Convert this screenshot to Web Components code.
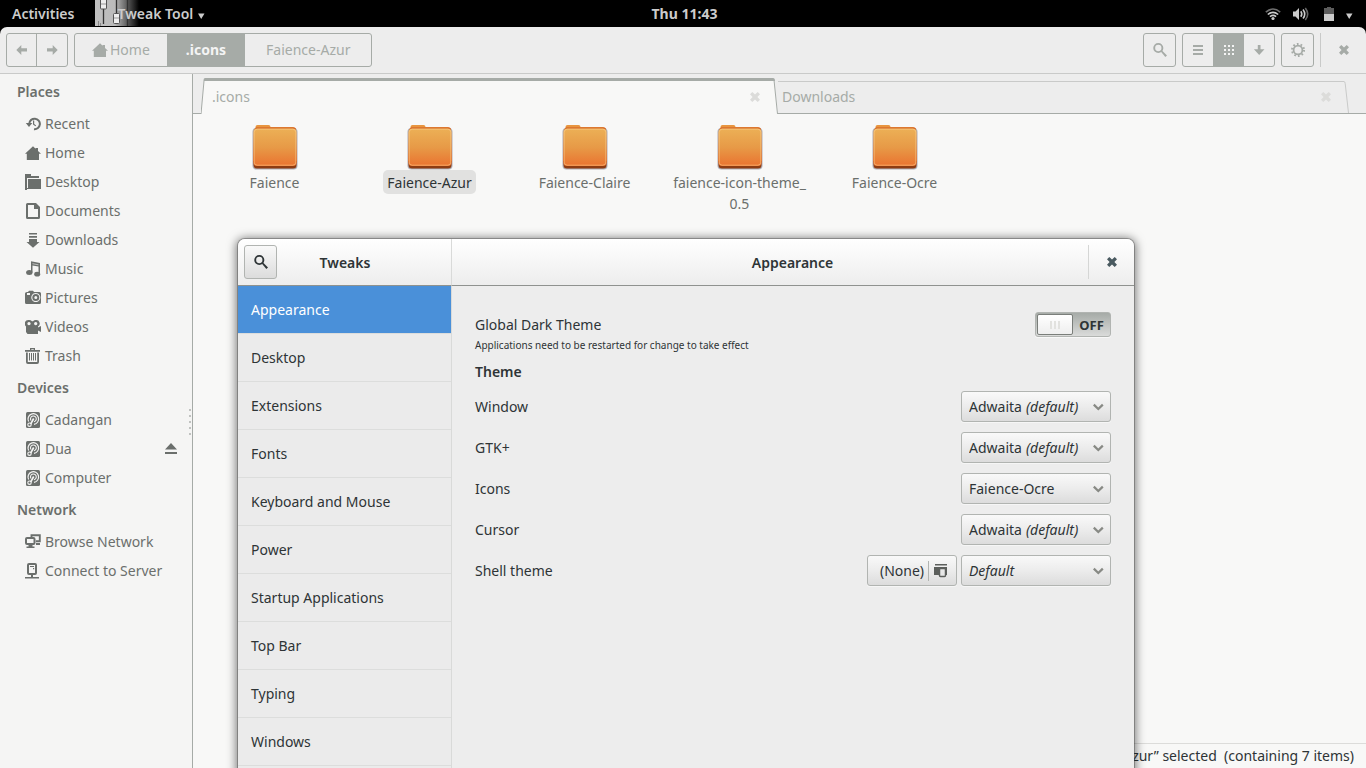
<!DOCTYPE html>
<html lang="en">
<head>
<meta charset="utf-8">
<meta name="viewport" content="width=device-width, initial-scale=1">
<title>Tweak Tool</title>
<style>
html, body { margin: 0; height: 100%; overflow: hidden; background: #000; }
body { font: 14px/20px "Noto Sans", "Open Sans", sans-serif; color: #2e3436; }
</style>
</head>
<body>
<desk-shell></desk-shell>
<script>
const ICONS = {
  back: '<path d="M7.300 3v3.300H13v3.200H7.300V13L2.300 8z"/>',
  forward: '<path d="M8.700 3v3.300H3v3.200h5.700V13l5-5z"/>',
  down: '<path d="M6.800 3h2.700v4.200H13.500L8.200 13 2.900 7.200h3.900z"/>',
  home: '<path d="M0 8.800 8 1.300l2.600 2.400V3H13v2.900l3 2.900h-2V15H1.800V8.800z"/>',
  search: '<circle cx="6.300" cy="6" r="4.100" fill="none" stroke="currentColor" stroke-width="1.900"/><path d="M8.800 9.600 10 8.500l5 4.900-1.700 1.700z"/>',
  list: '<path d="M3 3h10v2H3zM3 7h10v2H3zM3 11h10v2H3z"/>',
  grid: '<path d="M3 3h2v2H3zM7 3h2v2H7zM11 3h2v2h-2zM3 7h2v2H3zM7 7h2v2H7zM11 7h2v2h-2zM3 11h2v2H3zM7 11h2v2H7zM11 11h2v2h-2z"/>',
  gear: '<circle cx="8" cy="8" r="4.400" fill="none" stroke="currentColor" stroke-width="1.800"/><circle cx="8" cy="8" r="6" fill="none" stroke="currentColor" stroke-width="2" stroke-dasharray="1.700 2.070"/>',
  close: '<path d="M5.300 3 8 5.600 10.700 3 13 5.300 10.400 8l2.600 2.700L10.700 13 8 10.400 5.300 13 3 10.700 5.600 8 3 5.300z"/>',
  recent: '<path d="M4.300 7.500a5.300 5.300 0 1 1 4.700 5.700" fill="none" stroke="currentColor" stroke-width="2"/><path d="M.8 7h6.500L4 11z"/><path d="M8.600 4.500v3.700l2.200 1.700" fill="none" stroke="currentColor" stroke-width="1.200"/>',
  desktop: '<path d="M0 0h6v2h8v2H2v12H0z"/><path d="M3 5h13v10H3z"/><path d="M0 14h4v1H0z"/>',
  document: '<path fill-rule="evenodd" d="M2.500 0H11l4 4v10.500q0 1.500-1.500 1.500h-11Q1 16 1 14.500v-13Q1 0 2.500 0zM3 2v12h10V6H9V2z"/>',
  downloads: '<path d="M4 1h8v1.500H4zM4 4h8v1.700H4zM4 7h8v3h2.500L8 15.800 1.500 10H4z"/>',
  music: '<path d="M6 .3 15 2v11h-1.500V5.500L7.500 4.400v7H6z"/><ellipse cx="4.300" cy="11.500" rx="3.200" ry="2.500"/><ellipse cx="12.200" cy="13.200" rx="3" ry="2.400"/><path d="m7.500 2.700 6 1.100" stroke="#f5f5f4" stroke-width=".6"/>',
  pictures: '<path fill-rule="evenodd" d="M2 2h1L4 .8h4L9 2h5.500q1.500 0 1.500 1.500v9q0 1.500-1.500 1.500h-13Q0 14 0 12.500v-9Q0 2 2 2zM2 3v2h3V3zM10.800 3a4.500 4.500 0 1 0 .01 0z"/><circle cx="10.800" cy="7.500" r="2.500" fill="none" stroke="currentColor" stroke-width="2"/>',
  videos: '<path fill-rule="evenodd" d="M4 1a4 4 0 0 1 3 1.300h1A3.800 3.800 0 0 1 11 1a3.500 3.500 0 0 1 2 6.500v1L16 7v6l-3-1.500V15H2.500L1 13V7.500A3.700 3.700 0 0 1 4 1zM4 3a1.600 1.600 0 1 0 .01 0zM10.700 3a1.600 1.600 0 1 0 .01 0z"/>',
  trash: '<path d="M0 2h5V0h5v2h5v1.800H0zM6.300 1.200V2h2.400v-.8z" fill-rule="evenodd"/><path d="M1.900 4.500V14q0 1 1 1h9.200q1 0 1-1V4.500" fill="none" stroke="currentColor" stroke-width="1.800"/><path d="M4.500 5v7.500M6.500 5v7.500M8.500 5v7.500M10.500 5v7.500" stroke="currentColor"/>',
  disk: '<rect x="1" width="14" height="16" rx="1.500"/><g fill="none" stroke="#f5f5f4"><path d="M3.600 9.500A5.300 5.300 0 1 1 9 12.300" stroke-width="1.200"/><path d="M6 8.500A2.900 2.900 0 1 1 9 9.700" stroke-width="1.100"/><path d="M8.700 6.500 5.700 12" stroke-width="1.600"/><circle cx="4.500" cy="12.700" r="1.700" stroke-width="1.100"/></g>',
  eject: '<path d="M8 2 14 8.500H2zM2 11h12v2H2z"/>',
  network: '<path d="M6.500 3V1.200h8.300v6h-4" fill="none" stroke="currentColor" stroke-width="1.900"/><path d="M11 9h4v2h-4z"/><rect x="1" y="4" width="8.500" height="6" rx="1" fill="none" stroke="currentColor" stroke-width="2"/><path d="M3.500 10.500h4v2h2V14h-8v-1.500h2z"/>',
  server: '<rect x="3" y="1" width="8" height="10" rx="1" fill="none" stroke="currentColor" stroke-width="2"/><path d="M5 3h4v1H5zM8 5h1.200v1.200H8zM6 11h2v3H6zM0 14h14v1.500H0z"/>',
  wifi: '<circle cx="8" cy="12.500" r="1.600"/><g fill="none" stroke="currentColor" stroke-width="1.600"><path d="M.8 6.200Q8-.2 15.200 6.200" opacity=".55"/><path d="M2.800 8.500q5.200-4.400 10.400 0M4.900 10.700q3.100-2.500 6.200 0"/></g>',
  volume: '<path d="M0 5.500h2.500L6 2v12L2.500 10.500H0z"/><g fill="none" stroke="currentColor" stroke-width="1.600"><path d="M7.800 5.200q2 2.800 0 5.600M10 3.400q3.500 4.600 0 9.200"/><path d="M12.300 1.900q4.800 6.100 0 12.200" opacity=".5"/></g>',
  battery: '<path d="M6 1h4v1h3v6H3V2h3z" opacity=".45"/><path d="M3 8h10v7H3z"/>',
  arrow: '<path d="M5 7.500h6.500L8.200 13z"/>',
  chevron: '<path d="M2.800 5.700 7.300 10l4.500-4.300" fill="none" stroke="#888a85" stroke-width="2.300"/>',
  folder: '<path d="M2 1h12v1.500H2zM1 4h13v8H1z"/><rect x="6.500" y="5.500" width="6" height="8" rx="1" fill="#e8e8e8" stroke="currentColor" stroke-width="1.500"/>'
};

const define = (name, render) => customElements.define(name, class extends HTMLElement {
  constructor() {
    super();
    this.attachShadow({ mode: 'open' });
  }
  connectedCallback() {
    this.shadowRoot.innerHTML = render(this);
  }
});

define('sym-icon', el => `
<style>
:host { display: block; width: 16px; height: 16px; flex: none; }
svg { display: block; fill: currentColor; }
</style>
<svg width="16" height="16" viewBox="0 0 16 16" aria-hidden="true">${ICONS[el.getAttribute('name')]}</svg>`);

define('top-bar', () => `
<style>
:host { display: grid; grid-template-columns: 1fr auto 1fr; align-items: center; height: 27px; padding: 0 9px 0 12px; background: #000; color: #ccc; font-weight: 600; }
nav { display: flex; align-items: center; gap: 21px; height: 27px; }
button { font: inherit; color: inherit; background: none; border: 0; padding: 0; }
time { font-weight: 700; }
.app { display: grid; grid-template-columns: 22px auto 14px; align-items: center; justify-items: start; height: 27px; }
.app svg { grid-area: 1 / 1; align-self: start; }
.app span { grid-area: 1 / 2; z-index: 1; }
.tray { display: flex; justify-content: flex-end; gap: 12px; align-items: center; }
.menu { margin-left: -8px; }
</style>
<nav>
  <button>Activities</button>
  <button class="app">
    <svg width="44" height="26" viewBox="0 0 44 26" aria-hidden="true">
      <defs><linearGradient id="fade"><stop offset="0" stop-color="#c0c0c0"/><stop offset=".45" stop-color="#bbb"/><stop offset="1" stop-color="#000"/></linearGradient></defs>
      <path d="M0 0h44v26H0z" fill="url(#fade)"/>
      <path d="M8.500 8v16M21.500 0v14M32.500 0v26" stroke="#333" stroke-width="1.300"/>
      <path d="M3.500 21v5M5.500 23v3" stroke="#888"/>
      <rect x="5.500" y="-2" width="6" height="11" rx="1" fill="#eee" stroke="#555"/><path d="M6 4h5" stroke="#999"/>
      <rect x="18.500" y="13.500" width="6" height="10" rx="1" fill="#eee" stroke="#555"/><path d="M19 18h5" stroke="#999"/>
    </svg>
    <span>Tweak Tool</span><sym-icon name="arrow"></sym-icon>
  </button>
</nav>
<time>Thu 11:43</time>
<div class="tray"><sym-icon name="wifi"></sym-icon><sym-icon name="volume"></sym-icon><sym-icon name="battery"></sym-icon><sym-icon class="menu" name="arrow"></sym-icon></div>`);

define('files-toolbar', () => `
<style>
:host { display: flex; align-items: center; gap: 6px; height: 46px; padding: 0 6px; background: #ededed; border-bottom: 1px solid #c9cac9; border-radius: 7px 7px 0 0; color: #a6aba7; }
.group { display: flex; height: 34px; box-sizing: border-box; border: 1px solid #a6aba7; border-radius: 3px; overflow: hidden; }
button { display: flex; align-items: center; justify-content: center; box-sizing: border-box; font: inherit; color: inherit; background: none; border: 0; padding: 0; width: 31px; }
.nav button { width: 29px; }
.nav button + button { width: 31px; border-left: 1px solid #a6aba7; }
.view button { width: 30px; }
.view .on { width: 31px; }
.path button { width: auto; padding: 0 21px; gap: 2px; }
.path .home { padding: 0 17px; }
.path .on { padding: 0 19px; font-weight: 700; }
.on { background: #a6aba7; color: #f4f4f4; }
.fill { flex: 1; }
.close { width: 46px; height: 34px; margin-right: -6px; border-left: 1px solid #c9cac9; }
</style>
<div class="group nav"><button aria-label="Back"><sym-icon name="back"></sym-icon></button><button aria-label="Forward"><sym-icon name="forward"></sym-icon></button></div>
<div class="group path"><button class="home"><sym-icon name="home"></sym-icon>Home</button><button class="on">.icons</button><button>Faience-Azur</button></div>
<div class="fill"></div>
<div class="group"><button aria-label="Search"><sym-icon name="search"></sym-icon></button></div>
<div class="group view"><button aria-label="List view"><sym-icon name="list"></sym-icon></button><button class="on" aria-label="Icon view"><sym-icon name="grid"></sym-icon></button><button aria-label="View options"><sym-icon name="down"></sym-icon></button></div>
<div class="group"><button aria-label="Settings"><sym-icon name="gear"></sym-icon></button></div>
<button class="close" aria-label="Close"><sym-icon name="close"></sym-icon></button>`);

define('side-item', el => `
<style>
:host { display: block; }
.row { display: flex; align-items: center; height: 29px; padding: 0 13px 0 25px; }
a { display: flex; align-items: center; gap: 4px; flex: 1; color: inherit; text-decoration: none; }
button { border: 0; padding: 0; background: none; color: inherit; }
</style>
<div class="row"><a href="#"><sym-icon name="${el.getAttribute('icon')}"></sym-icon><slot></slot></a>${el.hasAttribute('ejectable') ? '<button aria-label="Eject"><sym-icon name="eject"></sym-icon></button>' : ''}</div>`);

define('places-sidebar', () => `
<style>
:host { display: block; position: relative; width: 192px; flex: none; background: #f5f5f4; border-right: 1px solid #a6aba7; color: #6b6f6c; }
h2 { margin: 0; padding-left: 17px; font-size: 14px; line-height: 35px; font-weight: 600; }
.grip { position: absolute; right: 1px; top: 335px; width: 2px; height: 26px; background: repeating-linear-gradient(#c0c2c0 0 2px, transparent 2px 6px); }
</style>
<nav>
<h2>Places</h2>
<side-item icon="recent">Recent</side-item><side-item icon="home">Home</side-item><side-item icon="desktop">Desktop</side-item>
<side-item icon="document">Documents</side-item><side-item icon="downloads">Downloads</side-item><side-item icon="music">Music</side-item>
<side-item icon="pictures">Pictures</side-item><side-item icon="videos">Videos</side-item><side-item icon="trash">Trash</side-item>
<h2>Devices</h2>
<side-item icon="disk">Cadangan</side-item><side-item icon="disk" ejectable>Dua</side-item><side-item icon="disk">Computer</side-item>
<h2>Network</h2>
<side-item icon="network">Browse Network</side-item><side-item icon="server">Connect to Server</side-item>
</nav>
<div class="grip"></div>`);

define('folder-tab', el => `
<style>
:host { display: flex; flex: 1 1 0; height: 36px; min-width: 0; color: #a6aba7; }
:host([active]) { flex-basis: 6px; }
svg { display: block; flex: none; }
.face { flex: 1; display: flex; align-items: center; justify-content: space-between; box-sizing: border-box; height: 33px; margin-top: 3px; border-top: 1px solid #c9cac9; box-shadow: 0 -1px #a6aba7 inset; padding: 0 10px 2px 4px; }
:host([active]) .face { height: 36px; margin-top: 0; border-top: 3px solid #a6aba7; box-shadow: none; background: #f8f8f7; padding: 0 10px 2px 7px; }
button { border: 0; padding: 0; background: none; color: #dcdcda; }
</style>
${el.hasAttribute('active') ? '<svg width="4" height="36"><path d="M0 36 3 3Q3 0 4 0v36z" fill="#f8f8f7"/><path d="M0 36 3 3" stroke="#a6aba7" fill="none"/><path d="M4 0v3H2.500Q2.500 0 4 0z" fill="#a6aba7"/></svg>' : ''}
<div class="face"><slot></slot><button aria-label="Close tab"><sym-icon name="close"></sym-icon></button></div>
${el.hasAttribute('active')
  ? '<svg width="5" height="36"><path d="M0 0q1 0 1 3l4 33H0z" fill="#f8f8f7"/><path d="m1 2 3.500 34" stroke="#a6aba7" fill="none"/><path d="M0 0q2 0 2 3H0z" fill="#a6aba7"/></svg>'
  : '<svg width="5" height="36"><path d="M0 3.500q1 0 1.200 2L4.500 35" stroke="#c9cac9" fill="none"/><path d="M0 35.500h5" stroke="#a6aba7"/></svg>'}`);

define('folder-item', el => `
<style>
:host { display: flex; flex-direction: column; align-items: center; color: #6b6f6c; }
svg { display: block; }
span { padding: 2px 4px 1px; line-height: 21px; border-radius: 5px; text-align: center; max-width: 140px; white-space: pre-line; }
:host([selected]) span { background: #e1e1e0; color: #2e3436; }
</style>
<svg width="48" height="46" viewBox="0 0 48 46" aria-hidden="true">
<defs><linearGradient id="f" x2="0" y2="1"><stop offset="0" stop-color="#ecb056"/><stop offset=".5" stop-color="#e79a47"/><stop offset="1" stop-color="#ea7330"/></linearGradient></defs>
<rect x="1.500" y="4" width="45" height="41.500" rx="4" fill="#667" opacity=".5"/>
<path d="M4.500 6V3q0-2 2-2h11q2 0 2 2h22q3 0 3 3z" fill="#e8953f"/>
<path d="M5 3.500h38q2 0 2 2l1 33H2l1-33z" fill="#d05c22"/>
<path d="M2.500 37h43v4q0 3.500-3.500 3.500H6Q2.500 44.500 2.500 41z" fill="#8e3b12"/>
<rect x="2.500" y="4.500" width="43" height="37.500" rx="3.500" fill="url(#f)"/>
<rect x="3.200" y="5.200" width="41.600" height="36" rx="3" fill="none" stroke="#ffd08e" stroke-opacity=".55"/>
</svg>
<span>${el.textContent}</span>`);

define('files-window', () => `
<style>
:host { display: flex; flex-direction: column; flex: 1; min-height: 0; }
.body { display: flex; flex: 1; min-height: 0; }
main { flex: 1; min-width: 0; display: flex; flex-direction: column; background: #f8f8f7; }
.tabs { display: flex; padding: 4px 17px 0 8px; background: linear-gradient(#a6aba7, #a6aba7) bottom / 100% 1px no-repeat #ededed; }
.items { flex: 1; display: grid; grid-template-columns: repeat(auto-fill, 155px); align-content: start; padding: 10px 4px; }
footer { align-self: flex-end; height: 24px; line-height: 24px; padding: 0 12px; border-top: 1px solid #dcdcda; white-space: pre; }
</style>
<files-toolbar></files-toolbar>
<div class="body">
  <places-sidebar></places-sidebar>
  <main>
    <div class="tabs"><folder-tab active>.icons</folder-tab><folder-tab>Downloads</folder-tab></div>
    <div class="items"><folder-item>Faience</folder-item><folder-item selected>Faience-Azur</folder-item><folder-item>Faience-Claire</folder-item><folder-item>faience-icon-theme_
0.5</folder-item><folder-item>Faience-Ocre</folder-item></div>
    <footer>“Faience-Azur” selected  (containing 7 items)</footer>
  </main>
</div>`);

define('combo-row', el => {
  const name = el.getAttribute('label');
  return `
<style>
:host { display: flex; align-items: center; gap: 4px; height: 31px; }
label { flex: 1; }
.combo { display: grid; grid-template-columns: 1fr auto; align-items: center; width: 150px; }
select { grid-area: 1 / 1 / 2 / 3; appearance: none; width: 100%; height: 31px; font: inherit; color: #2e3436; padding: 0 7px; margin: 0; border: 1px solid #b1b4b1; border-radius: 3px; background: linear-gradient(#f9f9f9, #ececec 50%, #dcdcdc); box-shadow: 0 1px #f6f6f6; }
:host([italic]) select { font-style: italic; }
.hint { grid-area: 1 / 1; padding-left: 65px; font-style: italic; pointer-events: none; }
sym-icon { pointer-events: none; }
.combo sym-icon { grid-area: 1 / 2; margin-right: 4px; }
</style>
<label for="pick">${name}</label><slot></slot>
<div class="combo"><select id="pick"><option>${el.getAttribute('value')}</option></select>${el.hasAttribute('hint') ? '<span class="hint">(default)</span>' : ''}<sym-icon name="chevron"></sym-icon></div>`;
});

define('theme-switch', () => `
<style>
:host { display: block; }
.row { display: flex; justify-content: space-between; align-items: flex-start; height: 26px; }
label { line-height: 26px; }
.track { display: grid; grid-template-columns: 37px 37px; align-items: center; box-sizing: border-box; width: 76px; height: 25px; border: 1px solid #b1b4b1; border-radius: 3px; background: linear-gradient(#a6aba7, #dadbda); box-shadow: 0 1px #f8f8f8; }
input { grid-area: 1 / 1; appearance: none; box-sizing: border-box; width: 36px; height: 21px; margin: 0 0 0 1px; border: 1px solid #7a7e7a; border-radius: 2px; background: linear-gradient(90deg, #e2e2df 0 2px, transparent 2px 4px, #e2e2df 4px 6px, transparent 6px 8px, #e2e2df 8px 10px) center / 10px 8px no-repeat, linear-gradient(#fff, #eee); }
b { grid-area: 1 / 2; text-align: center; font-size: 13px; font-weight: 700; }
small { display: block; font-size: 10px; line-height: 14px; }
</style>
<div class="row"><label for="dark">Global Dark Theme</label><div class="track"><input id="dark" type="checkbox" role="switch" aria-describedby="note"><b>OFF</b></div></div>
<small id="note">Applications need to be restarted for change to take effect</small>`);

define('file-button', () => `
<style>
:host { display: block; }
button { display: flex; align-items: center; gap: 4px; width: 90px; height: 31px; padding: 0 7px 0 12px; font: inherit; color: #2e3436; border: 1px solid #b1b4b1; border-radius: 3px; background: linear-gradient(#f9f9f9, #ececec 50%, #dcdcdc); box-shadow: 0 1px #f6f6f6; }
span { flex: 1; text-align: left; }
sym-icon { display: flex; align-items: center; padding-left: 4px; border-left: 1px solid #b1b4b1; height: 20px; color: #5c5f5c; }
</style>
<button><span><slot></slot></span><sym-icon name="folder"></sym-icon></button>`);

define('tweaks-window', () => `
<style>
:host { display: grid; grid-template-columns: 213px 1fr; grid-template-rows: 47px 1fr; background: #ededed; border-radius: 7px 7px 0 0; overflow: hidden; box-shadow: 0 0 0 1px rgba(70,70,70,.4), 0 1px 10px 2px rgba(0,0,0,.5); }
header { display: flex; align-items: center; background: linear-gradient(#fff, #ededed); border-bottom: 1px solid #8f928f; }
h1 { flex: 1; margin: 0; padding-top: 2px; font-size: 14px; font-weight: 600; text-align: center; }
button { display: flex; align-items: center; justify-content: center; padding: 0; color: inherit; border: 0; background: none; height: 34px; }
.left { padding: 0 6px; }
.left h1 { padding-right: 32px; }
.search { width: 33px; border: 1px solid #b1b4b1; border-radius: 3px; background: linear-gradient(#f9f9f9, #dcdcdc); }
.left, ul { border-right: 1px solid #d9dad9; }
.left { margin-right: -1px; }
.right { margin-left: 1px; padding-left: 45px; }
.close { width: 46px; border-left: 1px solid #d5d6d5; color: #4a5a60; margin-left: -45px; }
.right h1 { padding-right: 45px; }
ul { list-style: none; margin: 0 -1px 0 0; padding: 0; background: #ebebeb; }
li { border-bottom: 1px solid #dcdddc; }
li a { display: block; padding-left: 13px; line-height: 47px; color: inherit; text-decoration: none; }
li .on { background: #4a90d9; color: #fff; }
section { display: flex; flex-direction: column; gap: 10px; padding: 26px 23px 23px 24px; }
h2 { margin: 0 0 -1px; font-size: 14px; line-height: 20px; font-weight: 600; }
</style>
<header class="left"><button class="search" aria-label="Search"><sym-icon name="search"></sym-icon></button><h1>Tweaks</h1></header>
<header class="right"><h1>Appearance</h1><button class="close" aria-label="Close"><sym-icon name="close"></sym-icon></button></header>
<ul>${['Appearance', 'Desktop', 'Extensions', 'Fonts', 'Keyboard and Mouse', 'Power', 'Startup Applications', 'Top Bar', 'Typing', 'Windows'].map((t, i) => `<li><a href="#"${i ? '' : ' class="on"'}>${t}</a></li>`).join('')}</ul>
<section>
  <theme-switch></theme-switch>
  <h2>Theme</h2>
  <combo-row label="Window" value="Adwaita" hint></combo-row>
  <combo-row label="GTK+" value="Adwaita" hint></combo-row>
  <combo-row label="Icons" value="Faience-Ocre"></combo-row>
  <combo-row label="Cursor" value="Adwaita" hint></combo-row>
  <combo-row label="Shell theme" value="Default" italic><file-button>(None)</file-button></combo-row>
</section>`);

define('desk-shell', () => `
<style>
:host { display: flex; flex-direction: column; position: relative; height: 100vh; overflow: hidden; }
tweaks-window { position: absolute; left: 238px; right: 232px; top: 239px; bottom: -20px; }
</style>
<top-bar></top-bar>
<files-window></files-window>
<tweaks-window></tweaks-window>`);
</script>
</body>
</html>
